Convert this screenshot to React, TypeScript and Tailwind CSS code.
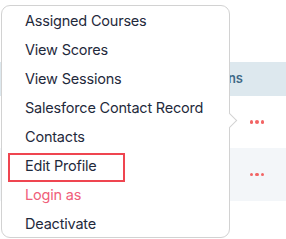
import React from "react";

const items = [
  "Assigned Courses",
  "View Scores",
  "View Sessions",
  "Salesforce Contact Record",
  "Contacts",
  "Edit Profile",
  "Login as",
  "Deactivate",
];

function Dots() {
  return (
    <div className="flex gap-[2px]">
      <span className="w-[3.5px] h-[3.5px] rounded-full bg-[#f26464]" />
      <span className="w-[3.5px] h-[3.5px] rounded-full bg-[#f26464]" />
      <span className="w-[3.5px] h-[3.5px] rounded-full bg-[#f26464]" />
    </div>
  );
}

export default function App() {
  return (
    <div className="relative w-[286px] h-[239px] bg-white overflow-hidden font-['Inter',sans-serif]">
      {/* table behind the menu */}
      <div className="flex flex-col pt-[62px]">
        <div className="h-[34px] bg-[#dde8ee] flex items-center justify-end pr-[43px] text-[13px] font-semibold text-[#3f6886]">
          Actions
        </div>
        <div className="h-[52px] bg-white flex items-center justify-end pr-[22px]">
          <Dots />
        </div>
        <div className="h-[53px] bg-[#f3f6f9] flex items-center justify-end pr-[22px]">
          <Dots />
        </div>
      </div>

      {/* popover menu */}
      <div className="absolute left-[1px] top-[5px] w-[229px] h-[233px] bg-white border border-[#d2d2d2] rounded-[9px]">
        <div className="absolute right-[-6px] top-[109px] w-[11px] h-[11px] bg-white border-t border-r border-[#d2d2d2] rotate-45" />
        <ul className="relative flex flex-col">
          {items.map((label) => (
            <li
              key={label}
              className={`h-[29px] flex items-center pl-[23px] text-[14.5px] tracking-[-0.2px] ${
                label === "Login as" ? "text-[#f0607a]" : "text-[#1f2a3c]"
              }`}
            >
              {label}
            </li>
          ))}
        </ul>
      </div>

      {/* highlight annotation */}
      <div className="absolute left-[8px] top-[153px] w-[117px] h-[29px] border-[2.5px] border-[#ef4550]" />
    </div>
  );
}
